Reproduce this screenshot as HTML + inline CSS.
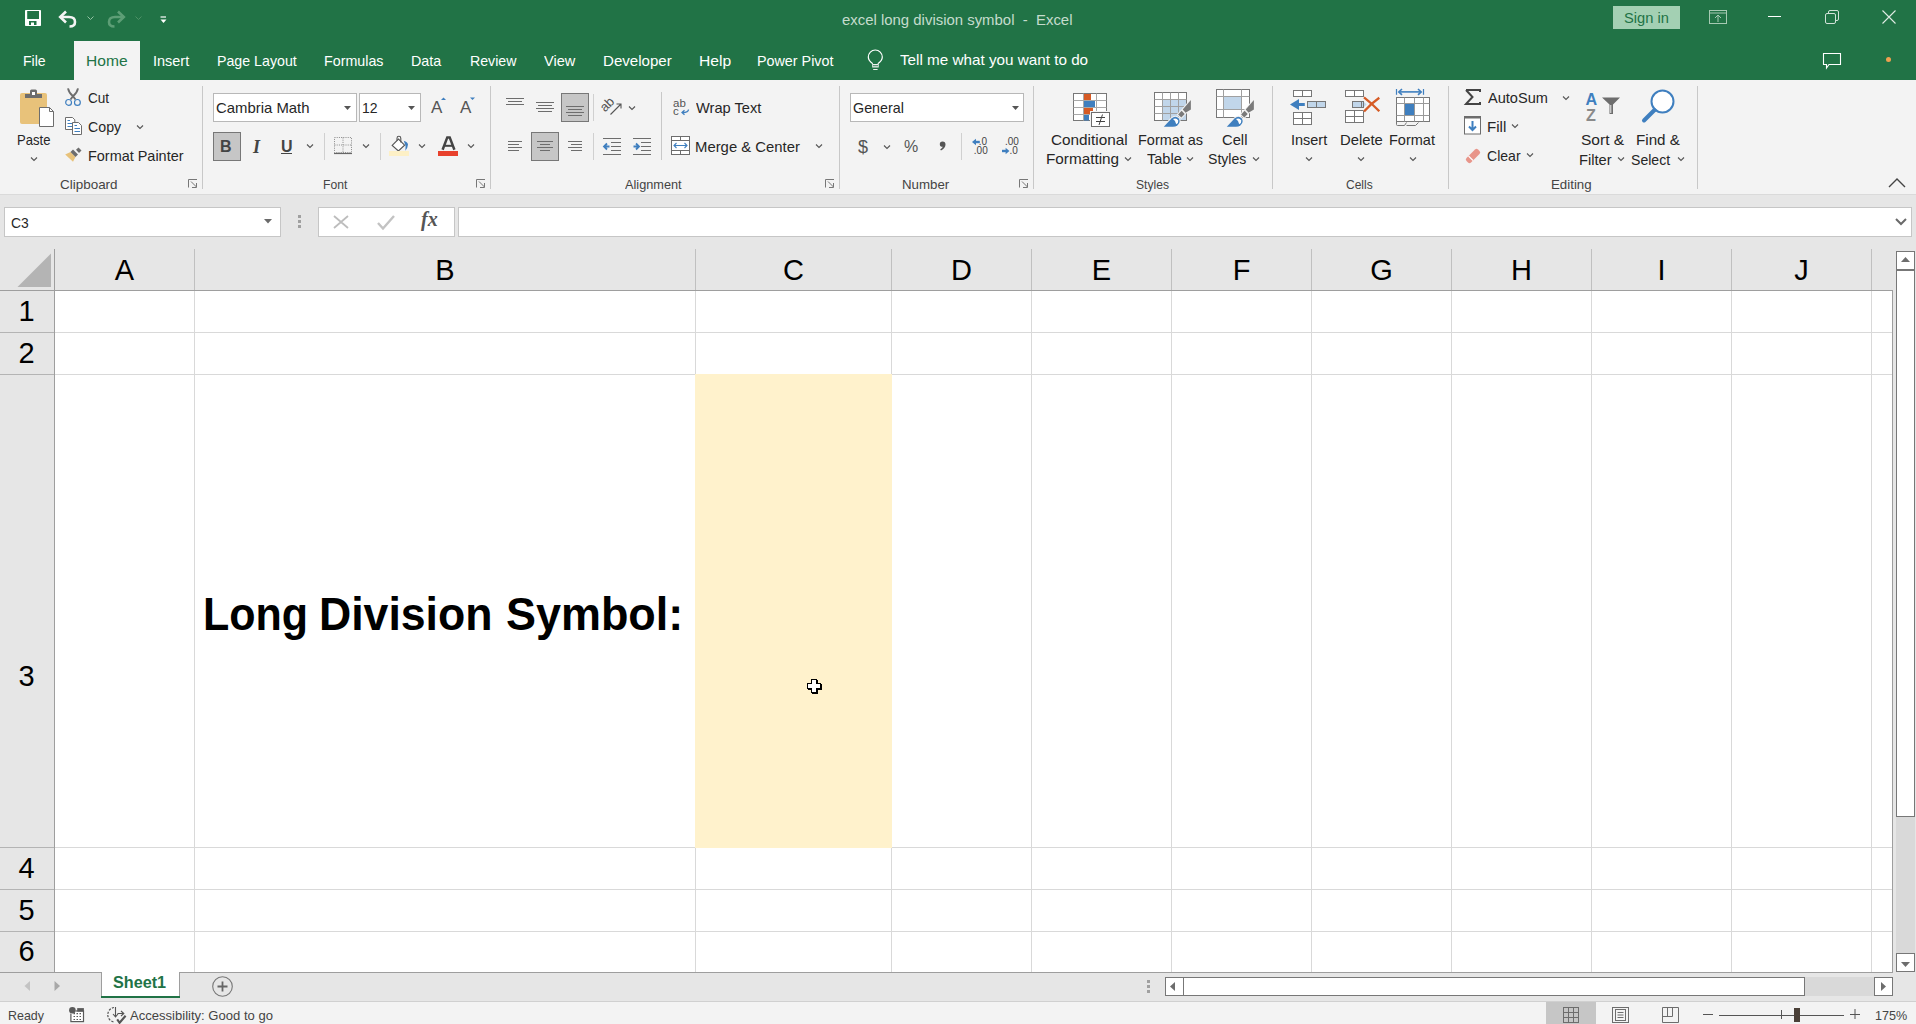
<!DOCTYPE html>
<html><head><meta charset="utf-8">
<style>
*{margin:0;padding:0;box-sizing:border-box}
html,body{width:1916px;height:1024px;overflow:hidden;background:#fff;font-family:"Liberation Sans",sans-serif;position:relative}
.a{position:absolute}
.t{position:absolute;line-height:1;white-space:nowrap}
svg{position:absolute;overflow:visible}
</style></head><body>
<div class="a" style="left:0px;top:0px;width:1916px;height:80px;background:#217346;"></div>
<div class="a" style="left:74px;top:41px;width:66px;height:39px;background:#f3f3f3;"></div>
<div id="tt1" class="t" style="left:22.83px;top:53.30px;font-size:15px;color:#ffffff;font-weight:normal;transform:scaleX(0.9375);transform-origin:0 0;">File</div>
<div id="tt2" class="t" style="left:153.04px;top:53.30px;font-size:15px;color:#ffffff;font-weight:normal;transform:scaleX(0.9649);transform-origin:0 0;">Insert</div>
<div id="tt3" class="t" style="left:217.03px;top:53.30px;font-size:15px;color:#ffffff;font-weight:normal;transform:scaleX(0.9464);transform-origin:0 0;">Page Layout</div>
<div id="tt4" class="t" style="left:324.02px;top:53.30px;font-size:15px;color:#ffffff;font-weight:normal;transform:scaleX(0.9516);transform-origin:0 0;">Formulas</div>
<div id="tt5" class="t" style="left:411.02px;top:53.30px;font-size:15px;color:#ffffff;font-weight:normal;transform:scaleX(0.9531);transform-origin:0 0;">Data</div>
<div id="tt6" class="t" style="left:470.40px;top:53.30px;font-size:15px;color:#ffffff;font-weight:normal;transform:scaleX(0.9449);transform-origin:0 0;">Review</div>
<div id="tt7" class="t" style="left:544.00px;top:53.30px;font-size:15px;color:#ffffff;font-weight:normal;transform:scaleX(0.9697);transform-origin:0 0;">View</div>
<div id="tt8" class="t" style="left:602.59px;top:53.30px;font-size:15px;color:#ffffff;font-weight:normal;transform:scaleX(1.0059);transform-origin:0 0;">Developer</div>
<div id="tt9" class="t" style="left:698.57px;top:53.30px;font-size:15px;color:#ffffff;font-weight:normal;transform:scaleX(1.0433);transform-origin:0 0;">Help</div>
<div id="tt10" class="t" style="left:757.42px;top:53.30px;font-size:15px;color:#ffffff;font-weight:normal;transform:scaleX(0.9550);transform-origin:0 0;">Power Pivot</div>
<div id="tt11" class="t" style="left:85.77px;top:53.30px;font-size:15px;color:#217346;font-weight:normal;transform:scaleX(1.0385);transform-origin:0 0;">Home</div>
<div id="tt12" class="t" style="left:899.59px;top:52.30px;font-size:15px;color:#ffffff;font-weight:normal;transform:scaleX(1.0162);transform-origin:0 0;">Tell me what you want to do</div>
<div id="tt13" class="t" style="left:842.20px;top:12.30px;font-size:15px;color:#c5dccd;font-weight:normal;transform:scaleX(0.9944);transform-origin:0 0;">excel long division symbol&nbsp; -&nbsp; Excel</div>
<div class="a" style="left:1613px;top:6px;width:67px;height:23px;background:#a3d0b3;"></div>
<div id="tt14" class="t" style="left:1623.80px;top:10.30px;font-size:15px;color:#217346;font-weight:normal;transform:scaleX(0.9778);transform-origin:0 0;">Sign in</div>
<svg style="left:866px;top:49px;" width="20" height="22" viewBox="0 0 20 22"><path d="M6.8 14.8 Q2.3 11.5 2.3 8 A7 7 0 0 1 16.3 8 Q16.3 11.5 11.8 14.8" fill="none" stroke="#fff" stroke-width="1.2"/><rect x="6.2" y="15" width="6.5" height="3.5" fill="#f0f0f0"/><rect x="7" y="16.3" width="5" height="0.9" fill="#217346"/><path d="M7.2 20.5 H11.6" stroke="#f0f0f0" stroke-width="1"/></svg>
<svg style="left:1709px;top:10px;" width="18" height="14" viewBox="0 0 18 14"><rect x="0.5" y="0.5" width="17" height="13" fill="none" stroke="#a6cab3" stroke-width="1"/><path d="M0.5 3 H17.5" stroke="#a6cab3"/><path d="M9 12 V5 M6 8 L9 5 L12 8" fill="none" stroke="#a6cab3"/></svg>
<div class="a" style="left:1768px;top:16px;width:13px;height:1px;background:#ffffff;"></div>
<svg style="left:1825px;top:10px;" width="14" height="14" viewBox="0 0 14 14"><rect x="0.5" y="3.5" width="10" height="10" rx="1.5" fill="none" stroke="#d2e2d8"/><path d="M3.5 3.5 V2 Q3.5 0.5 5 0.5 H12 Q13.5 0.5 13.5 2 V9 Q13.5 10.5 12 10.5 H10.5" fill="none" stroke="#d2e2d8"/></svg>
<svg style="left:1882px;top:10px;" width="14" height="14" viewBox="0 0 14 14"><path d="M0.5 0.5 L13.5 13.5 M13.5 0.5 L0.5 13.5" stroke="#e0ebe4" stroke-width="1.1"/></svg>
<svg style="left:1823px;top:53px;" width="19" height="18" viewBox="0 0 19 18"><path d="M0.5 0.5 H17.5 V11.5 H6 L3.5 15 V11.5 H0.5 Z" fill="none" stroke="#fff" stroke-width="1.1"/></svg>
<div class="a" style="left:1886px;top:57px;width:5px;height:5px;border-radius:50%;background:#f0a050"></div>
<svg style="left:25px;top:10px;" width="17" height="17" viewBox="0 0 17 17"><path d="M0 0.8 Q0 0 0.8 0 H15.2 Q16 0 16 0.8 V15.2 Q16 16 15.2 16 H0.8 Q0 16 0 15.2 Z" fill="#fff"/><rect x="2.2" y="1" width="11.8" height="8" fill="#217346"/><rect x="4" y="11" width="7.5" height="4" fill="#217346"/><rect x="6" y="12.5" width="3" height="2.5" fill="#fff"/></svg>
<svg style="left:58px;top:10px;" width="20" height="17" viewBox="0 0 20 17"><path d="M3 7 H11 Q17 7 17 12 Q17 16.5 11.5 16.5" fill="none" stroke="#f4f4f4" stroke-width="2.6"/><path d="M8 1.5 L2.2 7 L8 12.5" fill="none" stroke="#f4f4f4" stroke-width="2.6"/></svg>
<svg style="left:87px;top:16px;" width="7" height="4" viewBox="0 0 7 4"><path d="M0.5 0.5 L3.5 3.5 L6.5 0.5" fill="none" stroke="#93c2a3" stroke-width="1"/></svg>
<svg style="left:106px;top:10px;" width="20" height="17" viewBox="0 0 20 17"><path d="M17 7 H9 Q3 7 3 12 Q3 16.5 8.5 16.5" fill="none" stroke="#5d9e76" stroke-width="2.6"/><path d="M12 1.5 L17.8 7 L12 12.5" fill="none" stroke="#5d9e76" stroke-width="2.6"/></svg>
<svg style="left:135px;top:16px;" width="7" height="4" viewBox="0 0 7 4"><path d="M0.5 0.5 L3.5 3.5 L6.5 0.5" fill="none" stroke="#4d9066" stroke-width="1"/></svg>
<svg style="left:160px;top:16px;" width="7" height="8" viewBox="0 0 7 8"><path d="M0.5 1 H6" stroke="#fff" stroke-width="1.2"/><path d="M0.5 3.5 H6.5 L3.5 7 Z" fill="#fff"/></svg>
<div class="a" style="left:0px;top:80px;width:1916px;height:114px;background:#f3f3f3;"></div>
<div class="a" style="left:0px;top:194px;width:1916px;height:1px;background:#dadada;"></div>
<div class="a" style="left:202px;top:86px;width:1px;height:103px;background:#c8c8c8;"></div>
<div class="a" style="left:490px;top:86px;width:1px;height:103px;background:#c8c8c8;"></div>
<div class="a" style="left:839px;top:86px;width:1px;height:103px;background:#c8c8c8;"></div>
<div class="a" style="left:1033px;top:86px;width:1px;height:103px;background:#c8c8c8;"></div>
<div class="a" style="left:1272px;top:86px;width:1px;height:103px;background:#c8c8c8;"></div>
<div class="a" style="left:1448px;top:86px;width:1px;height:103px;background:#c8c8c8;"></div>
<div class="a" style="left:1697px;top:86px;width:1px;height:103px;background:#c8c8c8;"></div>
<div id="tt15" class="t" style="left:60.20px;top:177.57px;font-size:13.5px;color:#444;font-weight:normal;transform:scaleX(0.9965);transform-origin:0 0;">Clipboard</div>
<div id="tt16" class="t" style="left:322.85px;top:177.57px;font-size:13.5px;color:#444;font-weight:normal;transform:scaleX(0.9000);transform-origin:0 0;">Font</div>
<div id="tt17" class="t" style="left:625.38px;top:177.57px;font-size:13.5px;color:#444;font-weight:normal;transform:scaleX(0.9426);transform-origin:0 0;">Alignment</div>
<div id="tt18" class="t" style="left:901.80px;top:177.57px;font-size:13.5px;color:#444;font-weight:normal;transform:scaleX(0.9833);transform-origin:0 0;">Number</div>
<div id="tt19" class="t" style="left:1135.67px;top:177.57px;font-size:13.5px;color:#444;font-weight:normal;transform:scaleX(0.8972);transform-origin:0 0;">Styles</div>
<div id="tt20" class="t" style="left:1346.24px;top:177.57px;font-size:13.5px;color:#444;font-weight:normal;transform:scaleX(0.8897);transform-origin:0 0;">Cells</div>
<div id="tt21" class="t" style="left:1551.40px;top:177.57px;font-size:13.5px;color:#444;font-weight:normal;transform:scaleX(0.9850);transform-origin:0 0;">Editing</div>
<svg style="left:188px;top:179px;" width="10" height="9" viewBox="0 0 10 9"><path d="M0.5 8.5 V0.5 H9" fill="none" stroke="#777"/><path d="M3 2.5 L8.5 8 M8.5 4 V8.5 H4" fill="none" stroke="#777"/></svg>
<svg style="left:476px;top:179px;" width="10" height="9" viewBox="0 0 10 9"><path d="M0.5 8.5 V0.5 H9" fill="none" stroke="#777"/><path d="M3 2.5 L8.5 8 M8.5 4 V8.5 H4" fill="none" stroke="#777"/></svg>
<svg style="left:825px;top:179px;" width="10" height="9" viewBox="0 0 10 9"><path d="M0.5 8.5 V0.5 H9" fill="none" stroke="#777"/><path d="M3 2.5 L8.5 8 M8.5 4 V8.5 H4" fill="none" stroke="#777"/></svg>
<svg style="left:1019px;top:179px;" width="10" height="9" viewBox="0 0 10 9"><path d="M0.5 8.5 V0.5 H9" fill="none" stroke="#777"/><path d="M3 2.5 L8.5 8 M8.5 4 V8.5 H4" fill="none" stroke="#777"/></svg>
<svg style="left:19px;top:88px;" width="36" height="40" viewBox="0 0 36 40"><rect x="1" y="5" width="27" height="31" rx="2" fill="#e8c27a"/>
<path d="M6 10 V6 H11 V3 Q11 1.5 12.5 1.5 H16.5 Q18 1.5 18 3 V6 H23 V10 Z" fill="#6d6d6d"/><rect x="13" y="4" width="3" height="3" fill="#fff"/>
<path d="M20.5 19.5 H30.5 L34.5 23.5 V38.5 H20.5 Z" fill="#fff" stroke="#6d6d6d"/><path d="M30.5 19.5 V23.5 H34.5" fill="none" stroke="#6d6d6d"/></svg>
<div id="tt22" class="t" style="left:16.87px;top:132.30px;font-size:15px;color:#262626;font-weight:normal;transform:scaleX(0.8711);transform-origin:0 0;">Paste</div>
<svg style="left:30px;top:155.5px;" width="8" height="6" viewBox="0 0 8 6"><path d="M1 1.5 L4 4.5 L7 1.5" fill="none" stroke="#555" stroke-width="1.1"/></svg>
<svg style="left:65px;top:88px;" width="17" height="18" viewBox="0 0 17 18"><path d="M3 0.4 Q4 5 7.8 8 L10.5 11.5 M13 0.4 Q12 5 8.2 8 L5.5 11.5" fill="none" stroke="#6d6d6d" stroke-width="1.9"/>
<circle cx="3.6" cy="14.4" r="2.9" fill="none" stroke="#3f7fbf" stroke-width="1.2"/><circle cx="12.4" cy="14.4" r="2.9" fill="none" stroke="#3f7fbf" stroke-width="1.2"/></svg>
<div id="tt23" class="t" style="left:88.42px;top:90.30px;font-size:15px;color:#262626;font-weight:normal;transform:scaleX(0.9043);transform-origin:0 0;">Cut</div>
<svg style="left:65px;top:117px;" width="18" height="19" viewBox="0 0 18 19"><path d="M0.5 0.5 H7.5 L9.8 2.8 V12.5 H0.5 Z" fill="#fff" stroke="#6d6d6d"/>
<path d="M2.5 3.5 H5 M2.5 6.5 H7 M2.5 9.5 H7" stroke="#3f7fbf"/>
<path d="M7.5 5.5 H13.5 L16.5 8.5 V17.5 H7.5 Z" fill="#fff" stroke="#6d6d6d"/>
<path d="M9.5 8.5 H12 M9.5 11.5 H15 M9.5 14.5 H15" stroke="#3f7fbf"/></svg>
<div id="tt24" class="t" style="left:88.40px;top:119.30px;font-size:15px;color:#262626;font-weight:normal;transform:scaleX(0.9457);transform-origin:0 0;">Copy</div>
<svg style="left:136px;top:123.5px;" width="8" height="6" viewBox="0 0 8 6"><path d="M1 1.5 L4 4.5 L7 1.5" fill="none" stroke="#555" stroke-width="1.1"/></svg>
<svg style="left:65px;top:147px;" width="18" height="16" viewBox="0 0 18 16"><path d="M0.2 7.5 L5.5 5 L10.5 10 L8 14.8 Z" fill="#e8c27a"/>
<path d="M5.5 5 L8 2.5 L13 7.5 L10.5 10 Z" fill="#6d6d6d"/><path d="M11 2.8 L13.5 0.5 L16.5 3.5 L14 6 Z" fill="#6d6d6d"/></svg>
<div id="tt25" class="t" style="left:88.40px;top:148.30px;font-size:15px;color:#262626;font-weight:normal;transform:scaleX(0.9626);transform-origin:0 0;">Format Painter</div>
<div class="a" style="left:213px;top:93px;width:144px;height:29px;background:#fff;border:1px solid #b8b8b8"></div>
<div id="tt26" class="t" style="left:216.00px;top:100.30px;font-size:15px;color:#262626;font-weight:normal;transform:scaleX(0.9926);transform-origin:0 0;">Cambria Math</div>
<svg style="left:344.0px;top:105.5px;" width="7" height="4" viewBox="0 0 7 4"><path d="M0 0 H7 L3.5 4 Z" fill="#555"/></svg>
<div class="a" style="left:359px;top:93px;width:62px;height:29px;background:#fff;border:1px solid #b8b8b8"></div>
<div id="tt27" class="t" style="left:362.03px;top:100.30px;font-size:15px;color:#262626;font-weight:normal;transform:scaleX(0.9312);transform-origin:0 0;">12</div>
<svg style="left:408.0px;top:105.5px;" width="7" height="4" viewBox="0 0 7 4"><path d="M0 0 H7 L3.5 4 Z" fill="#555"/></svg>
<svg style="left:431px;top:97px;" width="16" height="17" viewBox="0 0 16 17"><text x="0" y="16" font-family="Liberation Sans" font-size="17" fill="#555">A</text><path d="M10 3 L12.5 0.5 L15 3 Z" fill="#3f7fbf"/></svg>
<svg style="left:460px;top:97px;" width="16" height="17" viewBox="0 0 16 17"><text x="0" y="16" font-family="Liberation Sans" font-size="17" fill="#555">A</text><path d="M10 0.5 L12.5 3 L15 0.5 Z" fill="#3f7fbf"/></svg>
<div class="a" style="left:213px;top:132px;width:28px;height:29px;background:#c6c6c6;border:1px solid #777"></div>
<div class="t" style="left:220px;top:139.46px;font-size:16px;color:#444;font-weight:bold;">B</div>
<div class="t" style="left:253px;top:137.5px;font-size:18px;line-height:1;font-family:Liberation Serif;font-style:italic;font-weight:bold;color:#444">I</div>
<div class="t" style="left:281px;top:138.96px;font-size:16px;color:#444;font-weight:bold;">U</div>
<div class="a" style="left:281px;top:153px;width:11px;height:1.2px;background:#444;"></div>
<svg style="left:305.5px;top:143px;" width="8" height="6" viewBox="0 0 8 6"><path d="M1 1.5 L4 4.5 L7 1.5" fill="none" stroke="#555" stroke-width="1.1"/></svg>
<div class="a" style="left:324px;top:133px;width:1px;height:27px;background:#d0d0d0;"></div>
<svg style="left:334px;top:137px;" width="18" height="17" viewBox="0 0 18 17"><rect x="0.5" y="0.5" width="17" height="15" fill="none" stroke="#8a8a8a" stroke-dasharray="1 1.2"/><path d="M9 0.5 V16 M0.5 8 H17.5" stroke="#8a8a8a" stroke-dasharray="1 1.2"/><path d="M0 16.5 H18" stroke="#666" stroke-width="1.2"/></svg>
<svg style="left:361.5px;top:143px;" width="8" height="6" viewBox="0 0 8 6"><path d="M1 1.5 L4 4.5 L7 1.5" fill="none" stroke="#555" stroke-width="1.1"/></svg>
<div class="a" style="left:380px;top:133px;width:1px;height:27px;background:#d0d0d0;"></div>
<svg style="left:389px;top:135px;" width="21" height="22" viewBox="0 0 21 22"><path d="M3.2 10.4 L9.5 4 L15.6 10.2 L9.4 16 Z" fill="#fff" stroke="#555" stroke-width="1.1"/>
<path d="M8 5.5 V3.2 A1.9 1.9 0 0 1 11.8 3.2 V7.6" fill="none" stroke="#555" stroke-width="1.1"/>
<path d="M14.8 5.8 Q18.6 7 19 9.5 Q18.8 12.8 16.4 15.8 Q17.3 10.5 14.8 5.8 Z" fill="#3f7fbf"/>
<rect x="0" y="16" width="20" height="5" fill="#fdf0c6"/></svg>
<svg style="left:418px;top:143px;" width="8" height="6" viewBox="0 0 8 6"><path d="M1 1.5 L4 4.5 L7 1.5" fill="none" stroke="#555" stroke-width="1.1"/></svg>
<svg style="left:438px;top:136px;" width="21" height="21" viewBox="0 0 21 21"><path d="M4.6 13.8 L9.3 1.4 H11.7 L16.4 13.8" fill="none" stroke="#444" stroke-width="2.5"/><path d="M6.5 9.8 H14.5" stroke="#444" stroke-width="2"/><rect x="0" y="15" width="20" height="5" fill="#e8412c"/></svg>
<svg style="left:467px;top:143px;" width="8" height="6" viewBox="0 0 8 6"><path d="M1 1.5 L4 4.5 L7 1.5" fill="none" stroke="#555" stroke-width="1.1"/></svg>
<div class="a" style="left:506px;top:98px;width:18px;height:1px;background:#6d6d6d;"></div>
<div class="a" style="left:508px;top:101px;width:14px;height:1px;background:#6d6d6d;"></div>
<div class="a" style="left:506px;top:104px;width:18px;height:1px;background:#6d6d6d;"></div>
<div class="a" style="left:536px;top:102px;width:18px;height:1px;background:#6d6d6d;"></div>
<div class="a" style="left:538px;top:105px;width:14px;height:1px;background:#6d6d6d;"></div>
<div class="a" style="left:536px;top:108px;width:18px;height:1px;background:#6d6d6d;"></div>
<div class="a" style="left:538px;top:111px;width:14px;height:1px;background:#6d6d6d;"></div>
<div class="a" style="left:561px;top:93px;width:28px;height:29px;background:#c6c6c6;border:1px solid #777"></div>
<div class="a" style="left:566px;top:106px;width:18px;height:1px;background:#6d6d6d;"></div>
<div class="a" style="left:568px;top:109px;width:14px;height:1px;background:#6d6d6d;"></div>
<div class="a" style="left:566px;top:112px;width:18px;height:1px;background:#6d6d6d;"></div>
<div class="a" style="left:568px;top:115px;width:14px;height:1px;background:#6d6d6d;"></div>
<div class="a" style="left:593px;top:94px;width:1px;height:27px;background:#d0d0d0;"></div>
<svg style="left:600px;top:96px;" width="24" height="21" viewBox="0 0 24 21"><text x="0" y="0" font-family="Liberation Sans" font-size="13" fill="#555" transform="translate(5 16.5) rotate(-45)">ab</text>
<path d="M10.5 18.5 L21 8 M16.5 8 H21 V12.5" fill="none" stroke="#555" stroke-width="1.1"/></svg>
<svg style="left:628px;top:104.5px;" width="8" height="6" viewBox="0 0 8 6"><path d="M1 1.5 L4 4.5 L7 1.5" fill="none" stroke="#555" stroke-width="1.1"/></svg>
<div class="a" style="left:661px;top:92px;width:1px;height:68px;background:#c8c8c8;"></div>
<svg style="left:673px;top:96px;" width="18" height="21" viewBox="0 0 18 21"><text x="0" y="11" font-family="Liberation Sans" font-size="11.5" fill="#555">ab</text><text x="0" y="19" font-family="Liberation Sans" font-size="11.5" fill="#555">c</text>
<path d="M15.5 13.5 Q15.5 16.5 9.5 16.5 M11.5 14.3 L9 16.5 L11.5 18.7" fill="none" stroke="#3f7fbf" stroke-width="1.3"/></svg>
<div id="tt28" class="t" style="left:695.99px;top:100.30px;font-size:15px;color:#262626;font-weight:normal;transform:scaleX(0.9750);transform-origin:0 0;">Wrap Text</div>
<div class="a" style="left:508px;top:141px;width:14px;height:1px;background:#6d6d6d;"></div>
<div class="a" style="left:508px;top:144px;width:11px;height:1px;background:#6d6d6d;"></div>
<div class="a" style="left:508px;top:147px;width:14px;height:1px;background:#6d6d6d;"></div>
<div class="a" style="left:508px;top:150px;width:11px;height:1px;background:#6d6d6d;"></div>
<div class="a" style="left:531px;top:132px;width:28px;height:29px;background:#c6c6c6;border:1px solid #777"></div>
<div class="a" style="left:537px;top:141px;width:16px;height:1px;background:#6d6d6d;"></div>
<div class="a" style="left:540px;top:144px;width:10px;height:1px;background:#6d6d6d;"></div>
<div class="a" style="left:537px;top:147px;width:16px;height:1px;background:#6d6d6d;"></div>
<div class="a" style="left:540px;top:150px;width:10px;height:1px;background:#6d6d6d;"></div>
<div class="a" style="left:568px;top:141px;width:14px;height:1px;background:#6d6d6d;"></div>
<div class="a" style="left:571px;top:144px;width:11px;height:1px;background:#6d6d6d;"></div>
<div class="a" style="left:568px;top:147px;width:14px;height:1px;background:#6d6d6d;"></div>
<div class="a" style="left:571px;top:150px;width:11px;height:1px;background:#6d6d6d;"></div>
<div class="a" style="left:593px;top:133px;width:1px;height:27px;background:#d0d0d0;"></div>
<svg style="left:603px;top:138px;" width="19" height="17" viewBox="0 0 19 17"><path d="M0 0.5 H18 M8 4.5 H18 M8 8.5 H18 M8 12.5 H18 M0 16.5 H18" stroke="#6d6d6d"/><path d="M6.5 8.5 H1 M4 5.5 L1 8.5 L4 11.5" fill="none" stroke="#3f7fbf" stroke-width="1.8"/></svg>
<svg style="left:633px;top:138px;" width="19" height="17" viewBox="0 0 19 17"><path d="M0 0.5 H18 M8 4.5 H18 M8 8.5 H18 M8 12.5 H18 M0 16.5 H18" stroke="#6d6d6d"/><path d="M0.5 8.5 H6 M3 5.5 L6 8.5 L3 11.5" fill="none" stroke="#3f7fbf" stroke-width="1.8"/></svg>
<svg style="left:671px;top:136px;" width="20" height="19" viewBox="0 0 20 19"><rect x="0.5" y="0.5" width="18" height="18" fill="#fff" stroke="#6d6d6d"/>
<path d="M0.5 4.5 H18.5 M0.5 14.5 H18.5 M9.5 0.5 V4.5 M9.5 14.5 V18.5" stroke="#6d6d6d"/>
<path d="M3 9.5 H16 M5.5 7 L3 9.5 L5.5 12 M13.5 7 L16 9.5 L13.5 12" fill="none" stroke="#3f7fbf" stroke-width="1.1"/></svg>
<div id="tt29" class="t" style="left:695.00px;top:139.30px;font-size:15px;color:#262626;font-weight:normal;transform:scaleX(0.9915);transform-origin:0 0;">Merge &amp; Center</div>
<svg style="left:815px;top:143px;" width="8" height="6" viewBox="0 0 8 6"><path d="M1 1.5 L4 4.5 L7 1.5" fill="none" stroke="#555" stroke-width="1.1"/></svg>
<div class="a" style="left:850px;top:93px;width:174px;height:29px;background:#fff;border:1px solid #b8b8b8"></div>
<div id="tt30" class="t" style="left:852.82px;top:100.30px;font-size:15px;color:#262626;font-weight:normal;transform:scaleX(0.9538);transform-origin:0 0;">General</div>
<svg style="left:1011.5px;top:105.5px;" width="7" height="4" viewBox="0 0 7 4"><path d="M0 0 H7 L3.5 4 Z" fill="#555"/></svg>
<div class="t" style="left:858px;top:137.76px;font-size:18px;color:#555;font-weight:normal;">$</div>
<svg style="left:883px;top:143.5px;" width="8" height="6" viewBox="0 0 8 6"><path d="M1 1.5 L4 4.5 L7 1.5" fill="none" stroke="#555" stroke-width="1.1"/></svg>
<div class="t" style="left:904px;top:139.46px;font-size:16px;color:#555;font-weight:normal;">%</div>
<svg style="left:939px;top:141px;" width="7" height="10" viewBox="0 0 7 10"><path d="M3.5 0.5 Q6.5 0.5 6.5 3.5 Q6.5 7 2 9.5 L1.2 8.6 Q3.5 7 3.8 5.8 Q0.8 5.8 0.8 3.2 Q0.8 0.5 3.5 0.5 Z" fill="#555"/></svg>
<div class="a" style="left:961px;top:133px;width:1px;height:27px;background:#d0d0d0;"></div>
<svg style="left:971px;top:137px;" width="18" height="18" viewBox="0 0 18 18"><text x="7.8" y="8" font-family="Liberation Sans" font-size="10" fill="#444">.0</text><text x="2.8" y="17" font-family="Liberation Sans" font-size="10" fill="#444">.00</text><path d="M4 5 H8.8" stroke="#3f7fbf" stroke-width="2.4"/><path d="M1 5 L5 1.8 V8.2 Z" fill="#3f7fbf"/></svg>
<svg style="left:1001px;top:137px;" width="18" height="18" viewBox="0 0 18 18"><text x="3.9" y="8" font-family="Liberation Sans" font-size="10" fill="#444">.00</text><text x="8.4" y="17" font-family="Liberation Sans" font-size="10" fill="#444">.0</text><path d="M1 14 H5.5" stroke="#3f7fbf" stroke-width="2.4"/><path d="M8.4 14 L4.6 10.8 V17.2 Z" fill="#3f7fbf"/></svg>
<svg style="left:1073px;top:93px;" width="39" height="36" viewBox="0 0 39 36"><rect x="0.5" y="0.5" width="33" height="27" fill="#fff" stroke="#777"/>
<path d="M0.5 7.5 H33.5 M0.5 14.5 H33.5 M0.5 21.5 H33.5 M10.5 0.5 V27.5 M23.5 0.5 V27.5" stroke="#a8a8a8"/>
<rect x="11" y="1" width="7" height="6" fill="#d65b25"/><rect x="11" y="8" width="11" height="6" fill="#3f7fbf"/><rect x="11" y="15" width="9" height="6" fill="#d65b25"/><rect x="11" y="22" width="5" height="5.5" fill="#3f7fbf"/>
<rect x="17" y="18" width="22" height="18" fill="#f3f3f3"/>
<rect x="18.5" y="19.5" width="18" height="14" fill="#fff" stroke="#6d6d6d"/>
<path d="M23 24.5 H32 M23 28.5 H32 M29.5 21.5 L26 32" stroke="#444" stroke-width="1"/></svg>
<div id="tt31" class="t" style="left:1051.00px;top:131.80px;font-size:15px;color:#262626;font-weight:normal;transform:scaleX(1.0213);transform-origin:0 0;">Conditional</div>
<div id="tt32" class="t" style="left:1045.58px;top:151.30px;font-size:15px;color:#262626;font-weight:normal;transform:scaleX(1.0197);transform-origin:0 0;">Formatting</div>
<svg style="left:1123.5px;top:156px;" width="8" height="6" viewBox="0 0 8 6"><path d="M1 1.5 L4 4.5 L7 1.5" fill="none" stroke="#555" stroke-width="1.1"/></svg>
<svg style="left:1154px;top:92px;" width="40" height="36" viewBox="0 0 40 36"><rect x="0.5" y="0.5" width="32" height="28" fill="#fff" stroke="#777"/>
<rect x="9" y="8" width="23" height="20" fill="#c1d6ea"/>
<path d="M0.5 7.5 H32.5 M0.5 14.5 H32.5 M0.5 21.5 H32.5 M8.5 0.5 V28.5 M16.5 0.5 V28.5 M24.5 0.5 V28.5" stroke="#a0a0a0"/>
<g transform="translate(0 0)"><path d="M36.9 8.1 V17.5 L31.6 20.7 L28.7 17.5 Z M27.6 18.7 L30.7 22.1 L27.3 25.6 L24.1 22.4 Z M9.8 34.8 L17.5 26.5 Q21.5 23 24.8 26.5 Q27 30 23.5 33.2 Q21.5 34.8 19 34.8 Z" fill="#f3f3f3" stroke="#f3f3f3" stroke-width="2"/><path d="M36.9 8.1 V17.5 L31.6 20.7 L28.7 17.5 Z" fill="#7a7a7a"/><path d="M27.6 18.7 L30.7 22.1 L27.3 25.6 L24.1 22.4 Z" fill="#7a7a7a"/>
<path d="M9.8 34.8 L17.5 26.5 Q21.5 23 24.8 26.5 Q27 30 23.5 33.2 Q21.5 34.8 19 34.8 Z" fill="#3f7fbf"/><path d="M19 27 Q22.5 25.5 24.3 28.5 Q24.5 31.5 22.2 32.3 Q22 29 19 27 Z" fill="#fff"/></g></svg>
<div id="tt33" class="t" style="left:1137.62px;top:131.80px;font-size:15px;color:#262626;font-weight:normal;transform:scaleX(0.9642);transform-origin:0 0;">Format as</div>
<div id="tt34" class="t" style="left:1146.60px;top:151.30px;font-size:15px;color:#262626;font-weight:normal;transform:scaleX(0.9686);transform-origin:0 0;">Table</div>
<svg style="left:1186px;top:156px;" width="8" height="6" viewBox="0 0 8 6"><path d="M1 1.5 L4 4.5 L7 1.5" fill="none" stroke="#555" stroke-width="1.1"/></svg>
<svg style="left:1216px;top:89px;" width="41" height="40" viewBox="0 0 41 40"><rect x="0.5" y="0.5" width="33" height="28" fill="#fff" stroke="#777"/>
<rect x="8" y="8" width="17" height="12.5" fill="#c1d6ea"/>
<path d="M0.5 7.5 H33.5 M0.5 20.5 H33.5 M7.5 0.5 V28.5 M25.5 0.5 V28.5" stroke="#a0a0a0"/>
<g transform="translate(1 3)"><path d="M36.9 8.1 V17.5 L31.6 20.7 L28.7 17.5 Z M27.6 18.7 L30.7 22.1 L27.3 25.6 L24.1 22.4 Z M9.8 34.8 L17.5 26.5 Q21.5 23 24.8 26.5 Q27 30 23.5 33.2 Q21.5 34.8 19 34.8 Z" fill="#f3f3f3" stroke="#f3f3f3" stroke-width="2"/><path d="M36.9 8.1 V17.5 L31.6 20.7 L28.7 17.5 Z" fill="#7a7a7a"/><path d="M27.6 18.7 L30.7 22.1 L27.3 25.6 L24.1 22.4 Z" fill="#7a7a7a"/>
<path d="M9.8 34.8 L17.5 26.5 Q21.5 23 24.8 26.5 Q27 30 23.5 33.2 Q21.5 34.8 19 34.8 Z" fill="#3f7fbf"/><path d="M19 27 Q22.5 25.5 24.3 28.5 Q24.5 31.5 22.2 32.3 Q22 29 19 27 Z" fill="#fff"/></g></svg>
<div id="tt35" class="t" style="left:1222.00px;top:131.80px;font-size:15px;color:#262626;font-weight:normal;transform:scaleX(0.9840);transform-origin:0 0;">Cell</div>
<div id="tt36" class="t" style="left:1208.03px;top:151.30px;font-size:15px;color:#262626;font-weight:normal;transform:scaleX(0.9375);transform-origin:0 0;">Styles</div>
<svg style="left:1251.5px;top:156px;" width="8" height="6" viewBox="0 0 8 6"><path d="M1 1.5 L4 4.5 L7 1.5" fill="none" stroke="#555" stroke-width="1.1"/></svg>
<svg style="left:1289px;top:89px;" width="39" height="37" viewBox="0 0 39 37"><rect x="4.5" y="1.5" width="18" height="6" fill="#fff" stroke="#777"/><path d="M13.5 1.5 V7.5" stroke="#777"/>
<rect x="18.5" y="12.5" width="18" height="6" fill="#c1d6ea" stroke="#777"/><path d="M27.5 12.5 V18.5" stroke="#777"/>
<path d="M15.8 15.5 H8" stroke="#3f7fbf" stroke-width="3"/><path d="M10 10 L1 15.5 L10 21 Z" fill="#3f7fbf"/>
<rect x="4.5" y="23.5" width="18" height="12" fill="#fff" stroke="#777"/><path d="M13.5 23.5 V35.5 M4.5 29.5 H22.5" stroke="#777"/></svg>
<div id="tt37" class="t" style="left:1290.62px;top:132.30px;font-size:15px;color:#262626;font-weight:normal;transform:scaleX(0.9649);transform-origin:0 0;">Insert</div>
<svg style="left:1305px;top:155.5px;" width="8" height="6" viewBox="0 0 8 6"><path d="M1 1.5 L4 4.5 L7 1.5" fill="none" stroke="#555" stroke-width="1.1"/></svg>
<svg style="left:1344px;top:89px;" width="37" height="36" viewBox="0 0 37 36"><rect x="1.5" y="1.5" width="18" height="6" fill="#fff" stroke="#777"/><path d="M10.5 1.5 V7.5" stroke="#777"/>
<rect x="8.5" y="12.5" width="11" height="6" fill="#c1d6ea" stroke="#777"/><path d="M17.5 12.5 V18.5" stroke="#777"/><path d="M20 13 L22.7 15.5 L20 18 Z" fill="#c1d6ea"/>
<rect x="1.5" y="21.5" width="18" height="12" fill="#fff" stroke="#777"/><path d="M10.5 21.5 V33.5 M1.5 27.5 H19.5" stroke="#777"/>
<path d="M20 8.5 L35.3 22.3 M35.3 8.5 L20 22.3" stroke="#f3f3f3" stroke-width="4"/>
<path d="M20 8.3 Q28 14.5 35.3 22.3 M35.3 8.7 Q27 14.5 20 22.5" fill="none" stroke="#d65b25" stroke-width="2.3"/></svg>
<div id="tt38" class="t" style="left:1339.60px;top:132.30px;font-size:15px;color:#262626;font-weight:normal;transform:scaleX(0.9884);transform-origin:0 0;">Delete</div>
<svg style="left:1357px;top:155.5px;" width="8" height="6" viewBox="0 0 8 6"><path d="M1 1.5 L4 4.5 L7 1.5" fill="none" stroke="#555" stroke-width="1.1"/></svg>
<svg style="left:1395px;top:88px;" width="37" height="39" viewBox="0 0 37 39"><path d="M1.5 1 V6.7 M28.5 1 V6.7" stroke="#3f7fbf" stroke-width="1.2"/><path d="M4 3.9 H26" stroke="#3f7fbf" stroke-width="1.6"/><path d="M7 1 L3.8 3.9 L7 6.8 M23 1 L26.2 3.9 L23 6.8" fill="none" stroke="#3f7fbf" stroke-width="1.6"/>
<rect x="1.5" y="9.5" width="33" height="24" fill="#fff" stroke="#777"/>
<path d="M1.5 15.5 H34.5 M1.5 27.5 H34.5 M9.5 9.5 V33.5 M19.5 9.5 V33.5 M28.5 9.5 V33.5" stroke="#999"/>
<rect x="10" y="16" width="9" height="11" fill="#3f7fbf"/>
<path d="M1.5 33.5 V36.5 Q1.5 37.5 2.5 37.5 H9.5 L11.5 34.5 M11.5 37.5 H20.5 L23.5 34.5" fill="none" stroke="#777"/></svg>
<div id="tt39" class="t" style="left:1389.21px;top:132.30px;font-size:15px;color:#262626;font-weight:normal;transform:scaleX(0.9667);transform-origin:0 0;">Format</div>
<svg style="left:1409px;top:155.5px;" width="8" height="6" viewBox="0 0 8 6"><path d="M1 1.5 L4 4.5 L7 1.5" fill="none" stroke="#555" stroke-width="1.1"/></svg>
<svg style="left:1464px;top:89px;" width="17" height="16" viewBox="0 0 17 16"><path d="M2 1 H16 V3 M2 1 L8.5 8 L2 15 H16 V13" fill="none" stroke="#444" stroke-width="2"/></svg>
<div id="tt40" class="t" style="left:1487.59px;top:90.30px;font-size:15px;color:#262626;font-weight:normal;transform:scaleX(0.9710);transform-origin:0 0;">AutoSum</div>
<svg style="left:1562px;top:94.5px;" width="8" height="6" viewBox="0 0 8 6"><path d="M1 1.5 L4 4.5 L7 1.5" fill="none" stroke="#555" stroke-width="1.1"/></svg>
<svg style="left:1464px;top:116px;" width="18" height="19" viewBox="0 0 18 19"><rect x="0.5" y="0.5" width="16" height="17.5" fill="#fff" stroke="#6d6d6d"/><rect x="0.5" y="0.5" width="16" height="2" fill="#6d6d6d"/><path d="M8.5 5 V14 M5 10.5 L8.5 14 L12 10.5" fill="none" stroke="#3f7fbf" stroke-width="2"/></svg>
<div id="tt41" class="t" style="left:1486.59px;top:118.80px;font-size:15px;color:#262626;font-weight:normal;transform:scaleX(1.0056);transform-origin:0 0;">Fill</div>
<svg style="left:1511px;top:122.5px;" width="8" height="6" viewBox="0 0 8 6"><path d="M1 1.5 L4 4.5 L7 1.5" fill="none" stroke="#555" stroke-width="1.1"/></svg>
<svg style="left:1465px;top:147px;" width="17" height="16" viewBox="0 0 17 16"><path d="M1.5 11 L10 2.5 Q11.5 1 13 2.5 L14.5 4 Q16 5.5 14.5 7 L6 15.5 Q4.5 17 3 15.5 L1.5 14 Q0 12.5 1.5 11 Z" fill="#e8958a"/><path d="M3.5 9 L8 13.5" stroke="#fff" stroke-width="1.1"/></svg>
<div id="tt42" class="t" style="left:1486.64px;top:148.30px;font-size:15px;color:#262626;font-weight:normal;transform:scaleX(0.9361);transform-origin:0 0;">Clear</div>
<svg style="left:1526px;top:151.5px;" width="8" height="6" viewBox="0 0 8 6"><path d="M1 1.5 L4 4.5 L7 1.5" fill="none" stroke="#555" stroke-width="1.1"/></svg>
<svg style="left:1584px;top:90px;" width="38" height="33" viewBox="0 0 38 33"><text x="1.5" y="14.5" font-family="Liberation Sans" font-size="17" font-weight="bold" fill="#3f7fbf" transform="scale(0.95 1)">A</text>
<text x="2" y="31.5" font-family="Liberation Sans" font-size="17" font-weight="bold" fill="#8a8a8a" transform="scale(0.95 1)">Z</text>
<path d="M18 7.5 H36 L29 14.5 V24 H25.5 V14.5 Z" fill="#6d6d6d"/><path d="M26.8 15 V23" stroke="#fff" stroke-width="0.9"/></svg>
<div id="tt43" class="t" style="left:1580.77px;top:132.30px;font-size:15px;color:#262626;font-weight:normal;transform:scaleX(1.0366);transform-origin:0 0;">Sort &amp;</div>
<div id="tt44" class="t" style="left:1578.61px;top:151.80px;font-size:15px;color:#262626;font-weight:normal;transform:scaleX(0.9788);transform-origin:0 0;">Filter</div>
<svg style="left:1617px;top:156px;" width="8" height="6" viewBox="0 0 8 6"><path d="M1 1.5 L4 4.5 L7 1.5" fill="none" stroke="#555" stroke-width="1.1"/></svg>
<svg style="left:1641px;top:89px;" width="36" height="35" viewBox="0 0 36 35"><circle cx="21.5" cy="12.5" r="11" fill="#fff" stroke="#3f7fbf" stroke-width="2"/><path d="M3 31.5 L13.5 21" stroke="#3f7fbf" stroke-width="4" stroke-linecap="round"/></svg>
<div id="tt45" class="t" style="left:1635.59px;top:132.30px;font-size:15px;color:#262626;font-weight:normal;transform:scaleX(1.0116);transform-origin:0 0;">Find &amp;</div>
<div id="tt46" class="t" style="left:1631.22px;top:151.80px;font-size:15px;color:#262626;font-weight:normal;transform:scaleX(0.9381);transform-origin:0 0;">Select</div>
<svg style="left:1676.5px;top:156px;" width="8" height="6" viewBox="0 0 8 6"><path d="M1 1.5 L4 4.5 L7 1.5" fill="none" stroke="#555" stroke-width="1.1"/></svg>
<svg style="left:1888px;top:178px;" width="18" height="10" viewBox="0 0 18 10"><path d="M1 9 L9 1 L17 9" fill="none" stroke="#444" stroke-width="1.4"/></svg>
<div class="a" style="left:0px;top:195px;width:1916px;height:96px;background:#e6e6e6;"></div>
<div class="a" style="left:4px;top:207px;width:277px;height:30px;background:#fff;border:1px solid #c6c6c6"></div>
<div id="tt47" class="t" style="left:11.41px;top:215.30px;font-size:15px;color:#262626;font-weight:normal;transform:scaleX(0.9263);transform-origin:0 0;">C3</div>
<svg style="left:264px;top:219px;" width="9" height="5" viewBox="0 0 9 5"><path d="M0 0 H8 L4 4.5 Z" fill="#6a6a6a"/></svg>
<div class="a" style="left:298px;top:215px;width:3px;height:3px;background:#a0a0a0;"></div>
<div class="a" style="left:298px;top:220px;width:3px;height:3px;background:#a0a0a0;"></div>
<div class="a" style="left:298px;top:225px;width:3px;height:3px;background:#a0a0a0;"></div>
<div class="a" style="left:318px;top:207px;width:137px;height:30px;background:#fff;border:1px solid #c6c6c6"></div>
<svg style="left:333px;top:215px;" width="16" height="14" viewBox="0 0 16 14"><path d="M1 1 L15 13 M15 1 L1 13" stroke="#bdbdbd" stroke-width="1.8"/></svg>
<svg style="left:377px;top:215px;" width="18" height="15" viewBox="0 0 18 15"><path d="M1 8 L6 13.5 L17 1" fill="none" stroke="#c3c3c3" stroke-width="2.4"/></svg>
<div class="t" style="left:421px;top:209px;font-size:20px;font-family:'Liberation Serif';font-style:italic;font-weight:bold;color:#555">fx</div>
<div class="a" style="left:458px;top:207px;width:1454px;height:30px;background:#fff;border:1px solid #c6c6c6"></div>
<svg style="left:1895px;top:218px;" width="12" height="8" viewBox="0 0 12 8"><path d="M1 1 L6 6 L11 1" fill="none" stroke="#6a6a6a" stroke-width="2"/></svg>
<div class="a" style="left:55px;top:291px;width:1837px;height:681px;background:#ffffff;"></div>
<div class="a" style="left:0px;top:291px;width:54px;height:681px;background:#e6e6e6;"></div>
<div class="a" style="left:194px;top:291px;width:1px;height:681px;background:#d9d9d9;"></div>
<div class="a" style="left:695px;top:291px;width:1px;height:681px;background:#d9d9d9;"></div>
<div class="a" style="left:891px;top:291px;width:1px;height:681px;background:#d9d9d9;"></div>
<div class="a" style="left:1031px;top:291px;width:1px;height:681px;background:#d9d9d9;"></div>
<div class="a" style="left:1171px;top:291px;width:1px;height:681px;background:#d9d9d9;"></div>
<div class="a" style="left:1311px;top:291px;width:1px;height:681px;background:#d9d9d9;"></div>
<div class="a" style="left:1451px;top:291px;width:1px;height:681px;background:#d9d9d9;"></div>
<div class="a" style="left:1591px;top:291px;width:1px;height:681px;background:#d9d9d9;"></div>
<div class="a" style="left:1731px;top:291px;width:1px;height:681px;background:#d9d9d9;"></div>
<div class="a" style="left:1871px;top:291px;width:1px;height:681px;background:#d9d9d9;"></div>
<div class="a" style="left:55px;top:332px;width:1837px;height:1px;background:#d9d9d9;"></div>
<div class="a" style="left:55px;top:374px;width:1837px;height:1px;background:#d9d9d9;"></div>
<div class="a" style="left:55px;top:847px;width:1837px;height:1px;background:#d9d9d9;"></div>
<div class="a" style="left:55px;top:889px;width:1837px;height:1px;background:#d9d9d9;"></div>
<div class="a" style="left:55px;top:931px;width:1837px;height:1px;background:#d9d9d9;"></div>
<div class="a" style="left:695px;top:374px;width:197px;height:474px;background:#fff2cc;"></div>
<div class="a" style="left:194px;top:249px;width:1px;height:41px;background:#c0c0c0;"></div>
<div class="a" style="left:695px;top:249px;width:1px;height:41px;background:#c0c0c0;"></div>
<div class="a" style="left:891px;top:249px;width:1px;height:41px;background:#c0c0c0;"></div>
<div class="a" style="left:1031px;top:249px;width:1px;height:41px;background:#c0c0c0;"></div>
<div class="a" style="left:1171px;top:249px;width:1px;height:41px;background:#c0c0c0;"></div>
<div class="a" style="left:1311px;top:249px;width:1px;height:41px;background:#c0c0c0;"></div>
<div class="a" style="left:1451px;top:249px;width:1px;height:41px;background:#c0c0c0;"></div>
<div class="a" style="left:1591px;top:249px;width:1px;height:41px;background:#c0c0c0;"></div>
<div class="a" style="left:1731px;top:249px;width:1px;height:41px;background:#c0c0c0;"></div>
<div class="a" style="left:1871px;top:249px;width:1px;height:41px;background:#c0c0c0;"></div>
<div class="a" style="left:0px;top:290px;width:1892px;height:1px;background:#9e9e9e;"></div>
<div class="a" style="left:54px;top:249px;width:1px;height:723px;background:#9e9e9e;"></div>
<div class="a" style="left:0px;top:332px;width:54px;height:1px;background:#b4b4b4;"></div>
<div class="a" style="left:0px;top:374px;width:54px;height:1px;background:#b4b4b4;"></div>
<div class="a" style="left:0px;top:847px;width:54px;height:1px;background:#b4b4b4;"></div>
<div class="a" style="left:0px;top:889px;width:54px;height:1px;background:#b4b4b4;"></div>
<div class="a" style="left:0px;top:931px;width:54px;height:1px;background:#b4b4b4;"></div>
<div class="a" style="left:1892px;top:290px;width:1px;height:682px;background:#9e9e9e;"></div>
<svg style="left:17px;top:253px;" width="35" height="35" viewBox="0 0 35 35"><path d="M34 0.5 V34 H0.5 Z" fill="#b4b4b4"/></svg>
<div class="t" style="left:74.5px;top:256.45px;width:100px;text-align:center;font-size:29px;color:#000;font-weight:normal;">A</div>
<div class="t" style="left:395.0px;top:256.45px;width:100px;text-align:center;font-size:29px;color:#000;font-weight:normal;">B</div>
<div class="t" style="left:743.5px;top:256.45px;width:100px;text-align:center;font-size:29px;color:#000;font-weight:normal;">C</div>
<div class="t" style="left:911.5px;top:256.45px;width:100px;text-align:center;font-size:29px;color:#000;font-weight:normal;">D</div>
<div class="t" style="left:1051.5px;top:256.45px;width:100px;text-align:center;font-size:29px;color:#000;font-weight:normal;">E</div>
<div class="t" style="left:1191.5px;top:256.45px;width:100px;text-align:center;font-size:29px;color:#000;font-weight:normal;">F</div>
<div class="t" style="left:1331.5px;top:256.45px;width:100px;text-align:center;font-size:29px;color:#000;font-weight:normal;">G</div>
<div class="t" style="left:1471.5px;top:256.45px;width:100px;text-align:center;font-size:29px;color:#000;font-weight:normal;">H</div>
<div class="t" style="left:1611.5px;top:256.45px;width:100px;text-align:center;font-size:29px;color:#000;font-weight:normal;">I</div>
<div class="t" style="left:1751.5px;top:256.45px;width:100px;text-align:center;font-size:29px;color:#000;font-weight:normal;">J</div>
<div class="t" style="left:1.5px;top:297.45px;width:50px;text-align:center;font-size:29px;color:#000;font-weight:normal;">1</div>
<div class="t" style="left:1.5px;top:339.45px;width:50px;text-align:center;font-size:29px;color:#000;font-weight:normal;">2</div>
<div class="t" style="left:1.5px;top:662.45px;width:50px;text-align:center;font-size:29px;color:#000;font-weight:normal;">3</div>
<div class="t" style="left:1.5px;top:854.45px;width:50px;text-align:center;font-size:29px;color:#000;font-weight:normal;">4</div>
<div class="t" style="left:1.5px;top:896.45px;width:50px;text-align:center;font-size:29px;color:#000;font-weight:normal;">5</div>
<div class="t" style="left:1.5px;top:937.45px;width:50px;text-align:center;font-size:29px;color:#000;font-weight:normal;">6</div>
<div id="tt48" class="t" style="left:202.63px;top:590.21px;font-size:47px;color:#000;font-weight:bold;transform:scaleX(0.9147);transform-origin:0 0;">Long</div>
<div id="tt49" class="t" style="left:318.74px;top:590.21px;font-size:47px;color:#000;font-weight:bold;transform:scaleX(0.9489);transform-origin:0 0;">Division</div>
<div id="tt50" class="t" style="left:506.02px;top:590.21px;font-size:47px;color:#000;font-weight:bold;transform:scaleX(0.9558);transform-origin:0 0;">Symbol:</div>
<svg style="left:806px;top:678px;" width="18" height="18" viewBox="0 0 18 18"><path d="M5 1 H11 V5 H15 V11 H11 V15 H5 V11 H1 V5 H5 Z" fill="#000" transform="translate(1 1)"/><path d="M5 1 H11 V5 H15 V11 H11 V15 H5 V11 H1 V5 H5 Z" fill="#000"/><path d="M6 2 H10 V6 H14 V10 H10 V14 H6 V10 H2 V6 H6 Z" fill="#fff"/></svg>
<div class="a" style="left:1893px;top:249px;width:23px;height:723px;background:#e6e6e6;"></div>
<div class="a" style="left:1896px;top:251px;width:19px;height:722px;background:#d9d9d9;"></div>
<div class="a" style="left:1896px;top:251px;width:19px;height:19px;background:#fff;border:1px solid #777"></div>
<svg style="left:1901px;top:257px;" width="9" height="5" viewBox="0 0 9 5"><path d="M0 5 H9 L4.5 0 Z" fill="#6d6d6d"/></svg>
<div class="a" style="left:1896px;top:270px;width:19px;height:547px;background:#fff;border:1px solid #777"></div>
<div class="a" style="left:1896px;top:953px;width:19px;height:19px;background:#fff;border:1px solid #777"></div>
<svg style="left:1901px;top:962px;" width="9" height="5" viewBox="0 0 9 5"><path d="M0 0 H9 L4.5 5 Z" fill="#6d6d6d"/></svg>
<div class="a" style="left:0px;top:972px;width:1916px;height:30px;background:#e6e6e6;"></div>
<div class="a" style="left:0px;top:972px;width:1893px;height:1px;background:#9e9e9e;"></div>
<svg style="left:24px;top:981px;" width="7" height="11" viewBox="0 0 7 11"><path d="M6 0 V10 L0.5 5 Z" fill="#c3c3c3"/></svg>
<svg style="left:54px;top:981px;" width="7" height="11" viewBox="0 0 7 11"><path d="M0.5 0 V10 L6 5 Z" fill="#a8a8a8"/></svg>
<div class="a" style="left:101px;top:972px;width:79px;height:26px;background:#ffffff;"></div>
<div class="a" style="left:101px;top:972px;width:1px;height:26px;background:#9e9e9e;"></div>
<div class="a" style="left:179px;top:972px;width:1px;height:26px;background:#9e9e9e;"></div>
<div class="a" style="left:101px;top:996px;width:79px;height:2px;background:#217346;"></div>
<div id="tt51" class="t" style="left:113.19px;top:975.46px;font-size:16px;color:#217346;font-weight:bold;transform:scaleX(1.0115);transform-origin:0 0;">Sheet1</div>
<svg style="left:212px;top:976px;" width="22" height="22" viewBox="0 0 22 22"><circle cx="10.5" cy="10.5" r="9.8" fill="none" stroke="#777" stroke-width="1.1"/><path d="M10.5 5.5 V15.5 M5.5 10.5 H15.5" stroke="#666" stroke-width="1.8"/></svg>
<div class="a" style="left:1147px;top:980px;width:3px;height:3px;background:#a0a0a0;"></div>
<div class="a" style="left:1147px;top:985px;width:3px;height:3px;background:#a0a0a0;"></div>
<div class="a" style="left:1147px;top:990px;width:3px;height:3px;background:#a0a0a0;"></div>
<div class="a" style="left:1165px;top:977px;width:728px;height:19px;background:#d9d9d9;"></div>
<div class="a" style="left:1165px;top:977px;width:640px;height:19px;background:#fff;border:1px solid #777"></div>
<div class="a" style="left:1165px;top:977px;width:19px;height:19px;background:#fff;border:1px solid #777"></div>
<svg style="left:1170px;top:982px;" width="6" height="9" viewBox="0 0 6 9"><path d="M5 0 V9 L0 4.5 Z" fill="#6d6d6d"/></svg>
<div class="a" style="left:1874px;top:977px;width:19px;height:19px;background:#fff;border:1px solid #777"></div>
<svg style="left:1881px;top:982px;" width="6" height="9" viewBox="0 0 6 9"><path d="M0 0 V9 L5 4.5 Z" fill="#6d6d6d"/></svg>
<div class="a" style="left:0px;top:1002px;width:1916px;height:22px;background:#f3f3f3;"></div>
<div class="a" style="left:0px;top:1001px;width:1916px;height:1px;background:#d0d0d0;"></div>
<div id="tt52" class="t" style="left:7.63px;top:1009.00px;font-size:13px;color:#444;font-weight:normal;transform:scaleX(0.9568);transform-origin:0 0;">Ready</div>
<svg style="left:68px;top:1006px;" width="18" height="18" viewBox="0 0 18 18"><rect x="2.9" y="5" width="12.6" height="10.6" fill="#fff" stroke="#5a5a5a" stroke-width="1.2"/>
<rect x="9.2" y="2.1" width="6.7" height="3.5" fill="#5a5a5a"/><circle cx="4.4" cy="4.3" r="3.6" fill="#f3f3f3"/><circle cx="4.4" cy="4.3" r="3.3" fill="#5a5a5a"/>
<path d="M5.5 7.6 H7 M8.5 7.6 H10 M11.5 7.6 H13 M5.5 10.5 H7 M8.5 10.5 H10 M11.5 10.5 H13 M5.5 13.5 H7 M8.5 13.5 H10 M11.5 13.5 H13" stroke="#5a5a5a" stroke-width="1.1"/></svg>
<svg style="left:104px;top:1005px;" width="24" height="19" viewBox="0 0 24 19"><path d="M10 2.5 A7.3 7.3 0 0 0 10.5 17" fill="none" stroke="#555" stroke-width="1.2" stroke-dasharray="2.2 1.3"/>
<path d="M11.5 2 V11.5 M9 9 L11.5 11.8 L14 9" fill="none" stroke="#555" stroke-width="1.1"/><path d="M13.5 8.5 H19.5 M17 6 L19.8 8.5 L17 11" fill="none" stroke="#555" stroke-width="1.1"/>
<path d="M13.2 14.3 L15.6 17.8 L21.6 10.7" fill="none" stroke="#555" stroke-width="2.1"/></svg>
<div id="tt53" class="t" style="left:129.79px;top:1009.00px;font-size:13px;color:#444;font-weight:normal;transform:scaleX(1.0042);transform-origin:0 0;">Accessibility: Good to go</div>
<div class="a" style="left:1546px;top:1002px;width:50px;height:22px;background:#c6c6c6;"></div>
<svg style="left:1563px;top:1007px;" width="16" height="16" viewBox="0 0 16 16"><rect x="0.5" y="0.5" width="15" height="15" fill="none" stroke="#6d6d6d"/><path d="M5.5 0.5 V15.5 M10.5 0.5 V15.5 M0.5 5.5 H15.5 M0.5 10.5 H15.5" stroke="#6d6d6d"/></svg>
<svg style="left:1612px;top:1007px;" width="17" height="16" viewBox="0 0 17 16"><rect x="0.5" y="0.5" width="16" height="15" fill="none" stroke="#6d6d6d"/><rect x="3.5" y="2.5" width="10" height="11" fill="none" stroke="#6d6d6d"/><path d="M5.5 5.5 H11.5 M5.5 8 H11.5 M5.5 10.5 H11.5" stroke="#6d6d6d"/></svg>
<svg style="left:1662px;top:1007px;" width="17" height="16" viewBox="0 0 17 16"><path d="M0.5 15.5 V0.5 H16.5 V15.5 Z M0.5 9.5 H10.5 V0.5 M5.5 0.5 V9.5" fill="none" stroke="#6d6d6d"/></svg>
<div class="a" style="left:1703px;top:1014px;width:10px;height:1px;background:#555;"></div>
<div class="a" style="left:1719px;top:1015px;width:125px;height:1px;background:#555;"></div>
<div class="a" style="left:1781px;top:1010px;width:1px;height:9px;background:#555;"></div>
<div class="a" style="left:1794px;top:1008px;width:6px;height:14px;background:#4a4038;"></div>
<svg style="left:1850px;top:1009px;" width="10" height="11" viewBox="0 0 10 11"><path d="M5 0 V10 M0 5.5 H10" stroke="#555" stroke-width="1"/></svg>
<div id="tt54" class="t" style="left:1875.03px;top:1009.00px;font-size:13px;color:#444;font-weight:normal;transform:scaleX(0.9688);transform-origin:0 0;">175%</div>
</body></html>
